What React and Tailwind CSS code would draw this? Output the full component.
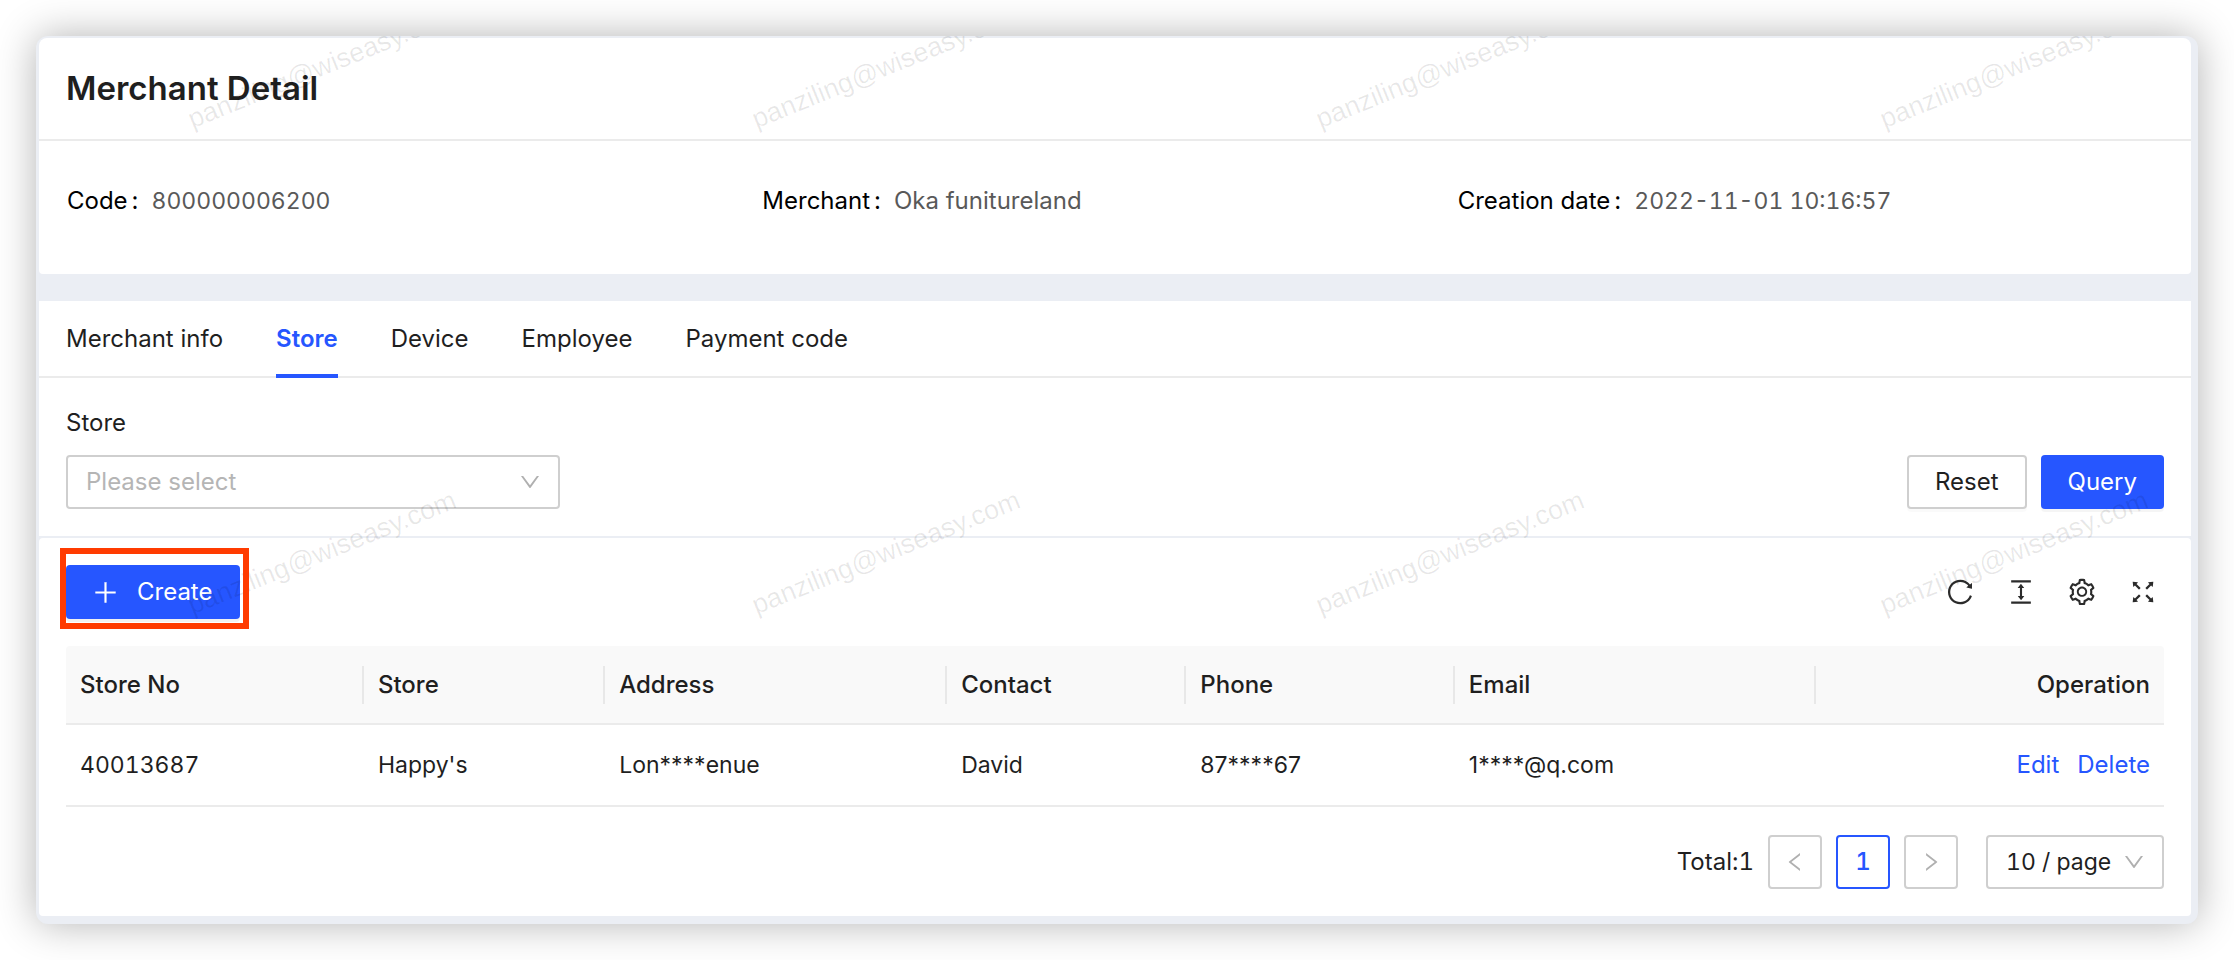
import {
  AiOutlineColumnHeight,
  AiOutlineDown,
  AiOutlineFullscreen,
  AiOutlineLeft,
  AiOutlinePlus,
  AiOutlineReload,
  AiOutlineRight,
  AiOutlineSetting,
} from "react-icons/ai";

const details = [
  { label: "Code", value: "800000006200", numeric: true },
  { label: "Merchant", value: "Oka funitureland", numeric: false },
  { label: "Creation date", value: "2022-11-01 10:16:57", numeric: true },
];

const tabs = ["Merchant info", "Store", "Device", "Employee", "Payment code"];

const columns = [
  { title: "Store No", width: "w-[14.2%]" },
  { title: "Store", width: "w-[11.5%]" },
  { title: "Address", width: "w-[16.3%]" },
  { title: "Contact", width: "w-[11.4%]" },
  { title: "Phone", width: "w-[12.8%]" },
  { title: "Email", width: "w-[17.2%]" },
];

const rows = [["40013687", "Happy's", "Lon****enue", "David", "87****67", "1****@q.com"]];

const tools = [
  { name: "Reload", Icon: AiOutlineReload },
  { name: "Density", Icon: AiOutlineColumnHeight },
  { name: "Column settings", Icon: AiOutlineSetting },
  { name: "Full screen", Icon: AiOutlineFullscreen },
];

function Watermark() {
  return (
    <div aria-hidden="true" className="pointer-events-none absolute inset-0 z-10 overflow-hidden">
      {[0, 1].map((row) => (
        <div key={row} className="flex h-[486px] pl-[159px]">
          {[0, 1, 2, 3].map((col) => (
            <div key={col} className="w-[564px] shrink-0 pt-[66px]">
              <span className="inline-block origin-bottom-left -rotate-22 font-['Liberation_Sans',sans-serif] text-[27px] leading-8 text-black/9">
                panziling@wiseasy.com
              </span>
            </div>
          ))}
        </div>
      ))}
    </div>
  );
}

function Header() {
  return (
    <header className="rounded-t-lg rounded-b-sm bg-white">
      <h1 className="border-b-2 border-[#ebebeb] px-[27px] pt-[30px] pb-[31px] text-[33px] leading-10 font-semibold">
        Merchant Detail
      </h1>
      <dl className="grid grid-cols-3 pt-11 pr-[38px] pb-[57px] pl-7">
        {details.map((item) => (
          <div key={item.label} className="flex leading-8">
            <dt className="text-black">
              {item.label}
              <span className="mr-[13px] ml-1">:</span>
            </dt>
            <dd className={item.numeric ? "text-[23px] text-[#595959] tabular-nums" : "text-[#595959]"}>{item.value}</dd>
          </div>
        ))}
      </dl>
    </header>
  );
}

function Tabs() {
  return (
    <nav className="flex gap-[53px] border-b-2 border-[#ebebeb] px-[27px]">
      {tabs.map((tab) => (
        <button
          key={tab}
          type="button"
          className={
            tab === "Store"
              ? "-mb-[2px] border-b-4 border-[#2656ff] pt-[22px] pb-[19px] leading-8 font-semibold text-[#2656ff]"
              : "-mb-[2px] border-b-4 border-transparent pt-[22px] pb-[19px] leading-8"
          }
        >
          {tab}
        </button>
      ))}
    </nav>
  );
}

function Filter() {
  return (
    <form className="flex items-end justify-between px-[27px] pt-[29px] pb-[27px]" onSubmit={(e) => e.preventDefault()}>
      <div className="w-[494px]">
        <label htmlFor="store" className="block leading-8">
          Store
        </label>
        <div className="relative mt-4">
          <select
            id="store"
            defaultValue=""
            className="h-[54px] w-full appearance-none rounded border-2 border-[#cfcfcf] bg-white px-[18px] text-[#b5b5b5]"
          >
            <option value="">Please select</option>
            <option>Happy's</option>
          </select>
          <AiOutlineDown className="pointer-events-none absolute top-[15px] right-[18px] size-6 text-[#b0b0b0]" />
        </div>
      </div>
      <div className="flex gap-[14px]">
        <button type="button" className="h-[54px] rounded border-2 border-[#cfcfcf] bg-white px-[26px] shadow-[0_3px_0_rgba(0,0,0,0.02)]">
          Reset
        </button>
        <button type="submit" className="h-[54px] rounded bg-[#2656ff] px-[27px] text-white shadow-[0_3px_0_rgba(0,0,0,0.04)]">
          Query
        </button>
      </div>
    </form>
  );
}

function Toolbar() {
  return (
    <div className="flex items-center justify-between">
      <div className="relative">
        <button
          type="button"
          className="flex h-[54px] items-center gap-[17px] rounded bg-[#2656ff] pr-7 pl-[25px] text-white shadow-[0_3px_0_rgba(0,0,0,0.05)]"
        >
          <AiOutlinePlus className="size-[29px]" />
          Create
        </button>
        <div className="pointer-events-none absolute -top-[17px] -right-[9px] -bottom-[10px] -left-[6px] z-20 border-6 border-[#ff3b00]" />
      </div>
      <div className="flex gap-[31px] pr-[6px] text-[#2b2b2b]">
        {tools.map(({ name, Icon }) => (
          <button key={name} type="button" aria-label={name}>
            <Icon className="size-[30px]" />
          </button>
        ))}
      </div>
    </div>
  );
}

function StoreTable() {
  return (
    <table className="mt-[27px] w-full table-fixed border-separate border-spacing-0 text-left">
      <thead>
        <tr>
          {columns.map((column, index) => (
            <th
              key={column.title}
              className={`${column.width} ${index === 0 ? "rounded-tl" : ""} h-[79px] border-b-2 border-[#ebebeb] bg-[#f9f9f9] p-0 font-medium`}
            >
              <div className="flex h-[38px] items-center border-r-2 border-[#e8e8e8] px-[14px]">{column.title}</div>
            </th>
          ))}
          <th className="h-[79px] rounded-tr border-b-2 border-[#ebebeb] bg-[#f9f9f9] px-[14px] py-0 text-right font-medium">
            Operation
          </th>
        </tr>
      </thead>
      <tbody>
        {rows.map((row) => (
          <tr key={row[0]}>
            {row.map((cell, index) => (
              <td
                key={cell}
                className={`${index === 0 ? "tabular-nums" : ""} h-[82px] border-b-2 border-[#ebebeb] px-[14px] py-0 text-[23px]`}
              >
                {cell}
              </td>
            ))}
            <td className="h-[82px] border-b-2 border-[#ebebeb] px-[14px] py-0 text-right text-[#2656ff]">
              <a href="#edit" className="mr-[18px]">
                Edit
              </a>
              <a href="#delete">Delete</a>
            </td>
          </tr>
        ))}
      </tbody>
    </table>
  );
}

function Pagination() {
  const box = "flex size-[54px] items-center justify-center rounded border-2 bg-white";
  return (
    <div className="mt-7 flex items-center justify-end gap-[14px] tabular-nums">
      <span>Total:1</span>
      <button type="button" aria-label="Previous page" className={`${box} border-[#cfcfcf] text-[#b0b0b0]`}>
        <AiOutlineLeft className="size-6" />
      </button>
      <button type="button" className={`${box} border-[#2656ff] font-medium text-[#2656ff]`}>
        1
      </button>
      <button type="button" aria-label="Next page" className={`${box} border-[#cfcfcf] text-[#b0b0b0]`}>
        <AiOutlineRight className="size-6" />
      </button>
      <div className="relative ml-[14px] w-[178px]">
        <select
          aria-label="Page size"
          defaultValue="10"
          className="h-[54px] w-full appearance-none rounded border-2 border-[#cfcfcf] bg-white pl-[18px] text-[23px]"
        >
          <option value="10">10 / page</option>
          <option value="20">20 / page</option>
        </select>
        <AiOutlineDown className="pointer-events-none absolute top-[15px] right-[18px] size-6 text-[#b0b0b0]" />
      </div>
    </div>
  );
}

export default function App() {
  return (
    <div className="bg-white p-9 font-['Inter',sans-serif] text-[24px] text-[#1f1f1f]">
      <div className="relative rounded-xl bg-[#ebeef4] pt-[2px] pr-[7px] pb-2 pl-[3px] shadow-[0_0_40px_rgba(0,0,0,0.3)]">
        <Watermark />
        <Header />
        <main className="mt-[27px]">
          <section className="bg-white">
            <Tabs />
            <Filter />
          </section>
          <section className="mt-[2px] rounded-t-sm rounded-b bg-white px-[27px] py-[27px]">
            <Toolbar />
            <StoreTable />
            <Pagination />
          </section>
        </main>
      </div>
    </div>
  );
}
